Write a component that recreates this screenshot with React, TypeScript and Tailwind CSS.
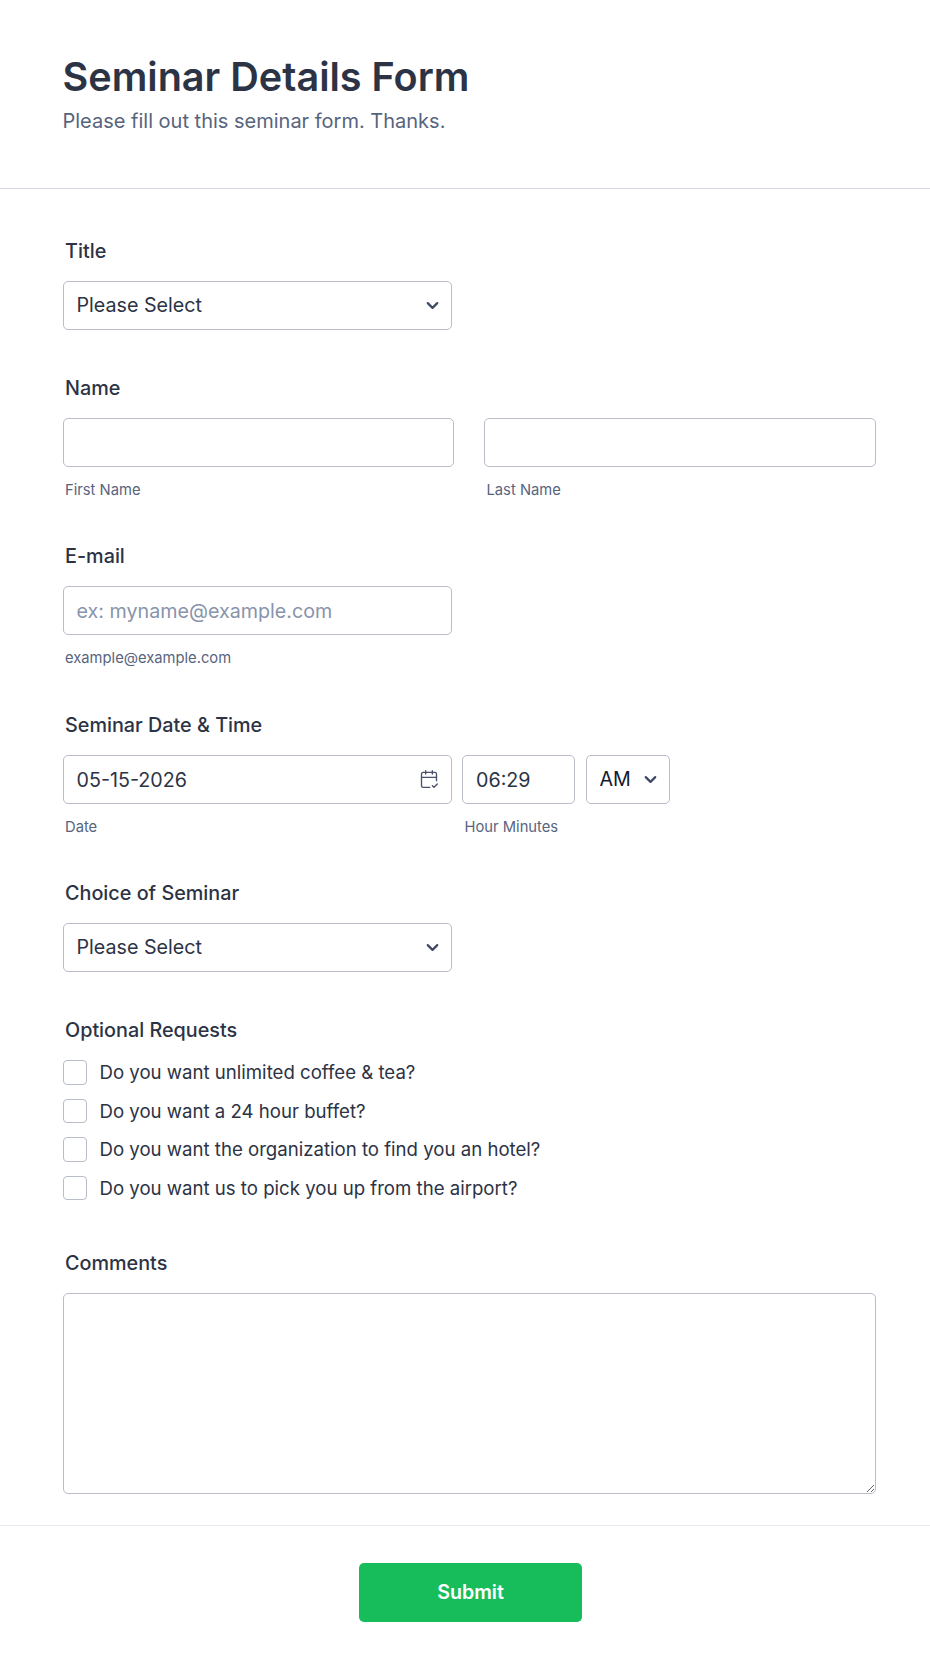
import { CalendarCheck2, ChevronDown } from "lucide-react"

const boxClass =
  "h-[49px] w-full rounded-[5px] border border-[#b8bdc9] bg-white px-[13px] text-[19.7px] outline-none"

function Label({ children }: { children: React.ReactNode }) {
  return (
    <div className="mb-[18px] ml-[2.5px] h-6 text-[19.8px] leading-6 font-medium text-[#2c3345]">
      {children}
    </div>
  )
}

function Sub({ children }: { children: React.ReactNode }) {
  return (
    <div className="mt-[15px] ml-[2.5px] h-4 text-[14.75px] leading-4 text-[#57647e]">
      {children}
    </div>
  )
}

function SelectBox({
  className = "w-[389px] text-[#2c3345]",
  label = "Please Select",
}: {
  className?: string
  label?: string
}) {
  return (
    <div className={`relative ${className}`}>
      <select className={`${boxClass} appearance-none pt-px`}>
        <option>{label}</option>
      </select>
      <ChevronDown
        size={19}
        strokeWidth={2.75}
        className="pointer-events-none absolute top-[15px] right-[10px] text-[#3e4763]"
      />
    </div>
  )
}

const requests = [
  "Do you want unlimited coffee & tea?",
  "Do you want a 24 hour buffet?",
  "Do you want the organization to find you an hotel?",
  "Do you want us to pick you up from the airport?",
]

export default function App() {
  return (
    <div className="h-[1672px] bg-white font-[Inter,sans-serif] text-[#2c3345]">
      {/* header */}
      <header className="h-[189px] border-b border-[#d8dae9] pt-[51px] pl-[62.5px]">
        <h1 className="text-[39.6px] leading-[52px] font-semibold">Seminar Details Form</h1>
        <p className="mt-[6px] text-[20px] leading-6 text-[#57647e]">Please fill out this seminar form. Thanks.</p>
      </header>

      <form className="pt-[50px] pr-[54.5px] pl-[62.5px]">
        <section>
          <Label>Title</Label>
          <SelectBox />
        </section>

        <section className="mt-[46px]">
          <Label>Name</Label>
          <div className="flex gap-[30px]">
            <div className="w-[391.5px]">
              <input className={boxClass} />
              <Sub>First Name</Sub>
            </div>
            <div className="w-[391.5px]">
              <input className={boxClass} />
              <Sub>Last Name</Sub>
            </div>
          </div>
        </section>

        <section className="mt-[46px]">
          <Label>E-mail</Label>
          <div className="w-[389px]">
            <input className={`${boxClass} placeholder:text-[#8894ab]`} placeholder="ex: myname@example.com" />
            <Sub>example@example.com</Sub>
          </div>
        </section>

        <section className="mt-[47px]">
          <Label>Seminar Date &amp; Time</Label>
          <div className="flex gap-[10.5px]">
            <div className="w-[389px]">
              <div className="relative">
                <input className={boxClass} defaultValue="05-15-2026" />
                <CalendarCheck2
                  size={20}
                  strokeWidth={1.6}
                  className="pointer-events-none absolute top-[14px] right-[13px] text-[#4a5068]"
                />
              </div>
              <Sub>Date</Sub>
            </div>
            <div className="w-[113px]">
              <input className={boxClass} defaultValue="06:29" />
              <Sub>Hour Minutes</Sub>
            </div>
            <SelectBox className="w-[84px] text-[#141a2e]" label="AM" />
          </div>
        </section>

        <section className="mt-[46px]">
          <Label>Choice of Seminar</Label>
          <SelectBox />
        </section>

        <section className="mt-[46px]">
          <Label>Optional Requests</Label>
          <ul className="flex flex-col gap-[14px]">
            {requests.map((r) => (
              <li key={r} className="flex h-[24.5px] items-center gap-[12.5px]">
                <span className="h-[24.5px] w-[24.5px] shrink-0 rounded-[4px] border border-[#b8bdc9] bg-white" />
                <span className="pt-[2px] text-[18.63px]">{r}</span>
              </li>
            ))}
          </ul>
        </section>

        <section className="mt-[51px]">
          <Label>Comments</Label>
          <textarea className="block h-[201px] w-full rounded-[5px] border border-[#b8bdc9] bg-white outline-none" />
        </section>
      </form>

      <footer className="mt-[31px] flex justify-center border-t border-[#e6e8f0] pt-[37px] pl-[11px]">
        <button
          type="button"
          className="h-[59px] w-[223px] rounded-[5px] bg-[#18bd5b] text-[19.6px] font-semibold text-white"
        >
          Submit
        </button>
      </footer>
    </div>
  )
}
